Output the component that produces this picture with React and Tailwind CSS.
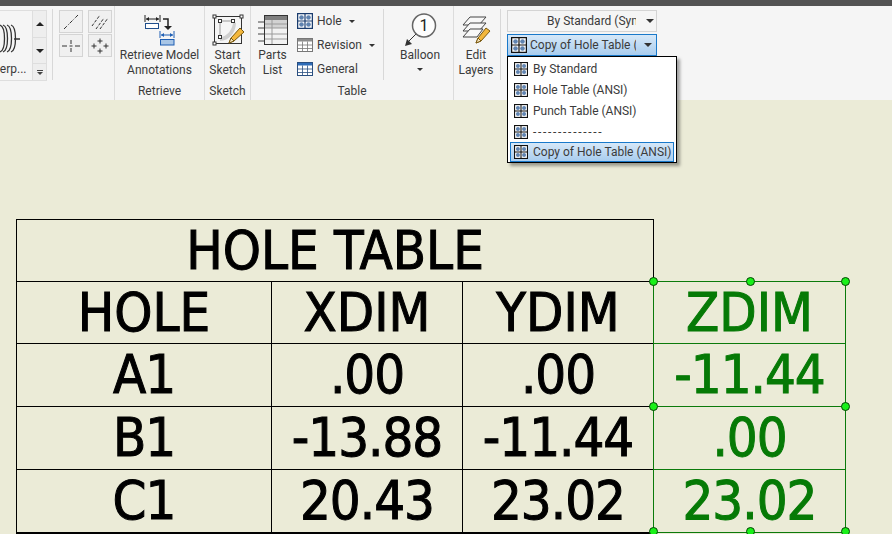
const uiFont = "font-['Roboto','Open_Sans',sans-serif]";

function HoleIcon({ size = 16, line = "#111" }) {
    return (
        <svg width={size} height={size} viewBox="0 0 16 16" className="shrink-0">
            <rect x="0.6" y="0.6" width="14.8" height="14.800" fill="#fff" stroke={line} strokeWidth="1.300" />
            <path d="M8 1V15M1 8H15" stroke={line} strokeWidth="1.200" />
            <circle cx="4.5" cy="4.5" r="2.300" fill="#5f83b0" />
            <circle cx="11.5" cy="4.5" r="2.300" fill="#5f83b0" />
            <circle cx="4.5" cy="11.5" r="2.300" fill="#5f83b0" />
            <circle cx="11.5" cy="11.5" r="2.300" fill="#5f83b0" />
        </svg>
    );
}

function SmallTableIcon({ head, line }) {
    return (
        <svg width="16" height="16" viewBox="0 0 16 16" className="shrink-0">
            <rect x="0.5" y="1.5" width="15" height="13" fill="#fff" stroke={line} />
            <rect x="1" y="2" width="14" height="2.5" fill={head} />
            <path d="M1 8H15M1 11.500H15M5.500 4.500V14M10.500 4.500V14" stroke={line} strokeWidth="0.8" />
        </svg>
    );
}

function Caret({ className = "border-x-[3px] border-t-[3px]" }) {
    return <span className={`inline-block h-0 w-0 border-x-transparent border-t-[#333] ${className}`} />;
}

function ShortSeparator() {
    return <div className="mt-[3px] h-[71px] w-px shrink-0 bg-[#d8d8d8]" />;
}

function LineButton({ children }) {
    return (
        <div className="flex h-[23px] w-[24px] items-center justify-center border border-[#d4d4d4] bg-[#f0f0f0]">
            <svg width="20" height="20" viewBox="0 0 20 20" fill="none" stroke="#333">
                {children}
            </svg>
        </div>
    );
}

function Panel({ label, width, children }) {
    return (
        <section className="flex h-full shrink-0 flex-col border-r border-[#dcdcdc]" style={{ width }}>
            <div className="flex h-[77px] pt-[7px]">{children}</div>
            <div className="text-center text-[12px] leading-[16px] text-[#3b3b3b]">{label}</div>
        </section>
    );
}

function Gallery() {
    return (
        <div className="flex h-full w-[53px] shrink-0 justify-between">
            <div className="mt-[4px] flex h-[71px] w-[47px] border-y border-r border-[#dedede]">
                <div className="flex w-[32px] flex-col overflow-hidden">
                    <svg width="32" height="36" viewBox="0 0 32 36" fill="none" stroke="#333" strokeWidth="1.300" className="mt-[7px]">
                        <path d="M0 7C6 9 6 32 0 34M3 7C9 9 9 32 3 34M7 7C13 9 13 32 7 34M11 7C17 9 17 32 11 34M14 21H20" />
                    </svg>
                    <div className="-ml-[14px] mt-[7px] whitespace-nowrap text-[12px] leading-[16px] text-[#3b3b3b]">Interp...</div>
                </div>
                <div className="flex w-[14px] flex-col border-l border-[#dedede] bg-[#eeeeee]">
                    <div className="flex h-[27px] items-center justify-center border-b border-[#dedede]">
                        <span className="h-0 w-0 border-x-[4px] border-b-[4px] border-x-transparent border-b-[#222]" />
                    </div>
                    <div className="flex h-[26px] items-center justify-center border-b border-[#dedede]">
                        <span className="h-0 w-0 border-x-[4px] border-t-[4px] border-x-transparent border-t-[#222]" />
                    </div>
                    <div className="flex flex-1 flex-col items-center justify-center gap-[1px]">
                        <span className="h-[1px] w-[6px] bg-[#444]" />
                        <span className="h-0 w-0 border-x-[3px] border-t-[3px] border-x-transparent border-t-[#444]" />
                    </div>
                </div>
            </div>
            <ShortSeparator />
        </div>
    );
}

function LineTools() {
    return (
        <div className="h-full w-[62px] shrink-0 border-r border-[#dcdcdc] pl-[6px] pt-[4px]">
            <div className="grid grid-cols-[24px_24px] gap-x-[5px] gap-y-[1px]">
                <LineButton><path d="M3 17L17 3" strokeDasharray="4 1.500 1 1.500" /></LineButton>
                <LineButton><path d="M2 14L10 3M6 17L14 6M10 17L18 6" strokeDasharray="3 1.500" /></LineButton>
                <LineButton><path d="M1 10H6M8.500 10H11.500M14 10H19M10 4V8M10 12V16" /></LineButton>
                <LineButton><path d="M10 2.500V7.500M7.500 5H12.500M4 7.500V12.500M1.500 10H6.500M16 7.500V12.500M13.500 10H18.500M10 12.500V17.500M7.500 15H12.500" /></LineButton>
            </div>
        </div>
    );
}

function RetrieveIcon() {
    return (
        <svg width="32" height="32" viewBox="0 0 32 32" fill="none">
            <path d="M1 1V8M16 1V8M2 5H15" stroke="#222" />
            <path d="M2 5L5 3V7ZM15 5L12 3V7Z" fill="#222" />
            <rect x="1.500" y="9.500" width="13" height="5" fill="#fff" stroke="#1f4e8c" />
            <path d="M19 5H24V13" stroke="#222" strokeWidth="1.500" />
            <path d="M20 12H28L24 16Z" fill="#222" />
            <path d="M16 17V24M30 17V24M17 21H29" stroke="#1f5fb4" />
            <path d="M17 21L20 19V23ZM29 21L26 19V23Z" fill="#1f5fb4" />
            <rect x="16.500" y="25.500" width="13.500" height="5.500" fill="#a9c6e6" stroke="#1f5fb4" />
        </svg>
    );
}

function SketchIcon() {
    return (
        <svg width="32" height="32" viewBox="0 0 32 32" fill="none">
            <rect x="2.500" y="2.500" width="27" height="27" stroke="#333" />
            <path d="M8 23C15 23 21 15 21 8L21 7L24 9C24 18 17 27 8 27Z" fill="#cfcfcf" />
            <path d="M8 7H21M8 7V23" stroke="#999" />
            {[[2.500, 2.500], [29.500, 2.500], [2.500, 29.500], [8, 7], [21, 7], [8, 23]].map(([x, y]) => (
                <rect key={`${x}-${y}`} x={x - 1.500} y={y - 1.500} width="3" height="3" fill="#fff" stroke="#333" />
            ))}
            <path d="M17 29L19 24L28 14L32 18L22 27Z" fill="#f3b73c" stroke="#7a5a10" />
            <path d="M17 29L19 24L22 27Z" fill="#f6e3bd" stroke="#7a5a10" />
        </svg>
    );
}

function PartsListIcon() {
    return (
        <svg width="32" height="32" viewBox="0 0 32 32" fill="none">
            <rect x="7.500" y="1.500" width="23" height="29" fill="#f2f2f2" stroke="#333" />
            <rect x="8" y="2" width="22" height="4" fill="#7f7f7f" />
            <rect x="8" y="6" width="22" height="8" fill="#d2d2d2" />
            <path d="M8 10H30M8 14H30M8 20H30M8 25H30M15 6V30" stroke="#9a9a9a" />
            <path d="M1 8H7M1 14H7M1 20H7M1 27H7" stroke="#444" />
        </svg>
    );
}

function BalloonIcon() {
    return (
        <svg width="33" height="34" viewBox="0 0 33 34" fill="none" className="block">
            <path d="M12 21L3 30" stroke="#333" />
            <path d="M1 33L3 26L8 31Z" fill="#333" />
            <circle cx="20" cy="12.500" r="11.500" fill="#fdfdfd" stroke="#666" strokeWidth="1.500" />
            <text x="20" y="18" textAnchor="middle" fontSize="16" fill="#222" fontFamily="Roboto, sans-serif">1</text>
        </svg>
    );
}

function LayersIcon() {
    return (
        <svg width="30" height="30" viewBox="0 0 30 30" fill="none" stroke="#444">
            <path d="M9 2H25L18 10H2Z" fill="#f8f8f8" />
            <path d="M9 8H25L18 16H2Z" fill="#f8f8f8" />
            <path d="M9 14H22L16 22H2Z" fill="#f8f8f8" />
            <path d="M15 28L17 23L25 13L29 16L20 26Z" fill="#f3b73c" stroke="#7a5a10" />
            <path d="M15 28L17 23L20 26Z" fill="#f6e3bd" stroke="#7a5a10" />
        </svg>
    );
}

function BigButton({ icon, lines, width, extra }) {
    return (
        <div className="flex flex-col items-center text-center text-[12px] leading-[15px] text-[#3b3b3b]" style={{ width }}>
            <div className="flex h-[33px] items-center justify-center">{icon}</div>
            <div className="mt-[2px]">
                {lines.map((line) => (
                    <div key={line} className="whitespace-nowrap">{line}</div>
                ))}
                {extra}
            </div>
        </div>
    );
}

function TableTool({ icon, label, caret }) {
    return (
        <div className="flex h-[24px] items-center gap-[4px] text-[12px] text-[#3b3b3b]">
            {icon}
            <span>{label}</span>
            {caret && <Caret className="ml-[3px] border-x-[3px] border-t-[3px]" />}
        </div>
    );
}

function TablePanel() {
    return (
        <section className="flex h-full w-[203px] shrink-0 flex-col border-r border-[#dcdcdc]">
            <div className="flex h-[77px]">
                <div className="flex w-[133px] shrink-0 justify-between">
                    <div className="flex">
                        <div className="w-[44px] pt-[7px]">
                            <BigButton width={43} icon={<PartsListIcon />} lines={["Parts", "List"]} />
                        </div>
                        <div className="ml-[2px] flex flex-col pt-[3px]">
                            <TableTool icon={<HoleIcon line="#1a3c6e" />} label="Hole" caret />
                            <TableTool icon={<SmallTableIcon head="#8c8c8c" line="#777" />} label="Revision" caret />
                            <TableTool icon={<SmallTableIcon head="#2e6cb8" line="#2a4f80" />} label="General" />
                        </div>
                    </div>
                    <ShortSeparator />
                </div>
                <div className="w-[70px] pl-[1px] pt-[7px]">
                    <BigButton
                        width={70}
                        icon={<BalloonIcon />}
                        lines={["Balloon"]}
                        extra={<div className="flex h-[12px] items-center justify-center"><Caret /></div>}
                    />
                </div>
            </div>
            <div className="text-center text-[12px] leading-[16px] text-[#3b3b3b]">Table</div>
        </section>
    );
}

function StylePicker() {
    return (
        <div className="relative ml-[6px] w-[150px] pt-[4px] text-[12px] text-[#3b3b3b]">
            <div className="flex h-[22px] items-center border border-[#d4d4d4] bg-[#f5f5f5] pl-[39px]">
                <span className="w-[89px] overflow-hidden whitespace-nowrap">By Standard (Symbol)</span>
                <Caret className="ml-[10px] border-x-[4px] border-t-[4px]" />
            </div>
            <div className="mt-[2px] flex h-[22px] items-center gap-[3px] border border-[#1979ca] bg-gradient-to-b from-[#d6e8f8] to-[#a9cdee] pl-[3px]">
                <HoleIcon />
                <span className="w-[106px] overflow-hidden whitespace-nowrap">Copy of Hole Table (ANSI)</span>
                <Caret className="ml-[5px] border-x-[4px] border-t-[4px]" />
            </div>
            <div className="absolute left-0 top-[50px] z-10 w-[170px] border border-black bg-white px-[2px] pt-[1px] shadow-[3px_3px_3px_rgba(0,0,0,0.35)]">
                {["By Standard", "Hole Table (ANSI)", "Punch Table (ANSI)"].map((item) => (
                    <div key={item} className="flex h-[21px] items-center gap-[5px] pl-[4px]">
                        <HoleIcon size={14} />
                        <span className="whitespace-nowrap">{item}</span>
                    </div>
                ))}
                <div className="flex h-[21px] items-center gap-[5px] pl-[4px]">
                    <HoleIcon size={14} />
                    <span className="whitespace-nowrap tracking-[1.7px]">--------------</span>
                </div>
                <div className="flex h-[20px] items-center gap-[5px] border border-[#1979ca] bg-gradient-to-b from-[#d6e8f8] to-[#a9cdee] pl-[3px]">
                    <HoleIcon size={14} />
                    <span className="whitespace-nowrap">Copy of Hole Table (ANSI)</span>
                </div>
            </div>
        </div>
    );
}

function Ribbon() {
    return (
        <div className={`flex h-[94px] shrink-0 bg-[#f5f5f5] ${uiFont}`}>
            <Gallery />
            <LineTools />
            <Panel label="Retrieve" width={90}>
                <BigButton width={90} icon={<RetrieveIcon />} lines={["Retrieve Model", "Annotations"]} />
            </Panel>
            <Panel label="Sketch" width={46}>
                <BigButton width={46} icon={<SketchIcon />} lines={["Start", "Sketch"]} />
            </Panel>
            <TablePanel />
            <div className="flex h-full w-[47px] shrink-0 justify-between pt-[7px]">
                <BigButton width={44} icon={<LayersIcon />} lines={["Edit", "Layers"]} />
                <div className="-mt-[4px] h-[71px] w-px shrink-0 bg-[#d8d8d8]" />
            </div>
            <StylePicker />
        </div>
    );
}

const ROWS = [
    ["HOLE", "XDIM", "YDIM", "ZDIM"],
    ["A1", ".00", ".00", "-11.44"],
    ["B1", "-13.88", "-11.44", ".00"],
    ["C1", "20.43", "23.02", "23.02"],
];

const HANDLES = [
    "left-[-5px] top-[-5px]",
    "left-[92px] top-[-5px]",
    "left-[187px] top-[-5px]",
    "left-[-5px] top-[120px]",
    "left-[187px] top-[120px]",
    "left-[-5px] top-[245px]",
    "left-[92px] top-[245px]",
    "left-[187px] top-[245px]",
];

function Cell({ text, selected, numeric }) {
    return (
        <div className={`flex items-center justify-center whitespace-nowrap border-b border-r ${numeric ? "tracking-[-1px]" : ""} ${selected ? "border-[#0b7a0b] text-[#067a06] [-webkit-text-stroke:1px_#067a06]" : "border-black text-black [-webkit-text-stroke:1px_#000]"}`}>
            {text}
        </div>
    );
}

function HoleTable() {
    return (
        <div className="relative w-[830px] font-['DejaVu_Sans_Condensed','DejaVu_Sans',sans-serif] text-[54px] leading-none">
            <div className="flex h-[62px] w-[638px] items-center justify-center border-x border-t border-black [-webkit-text-stroke:1px_#000]">HOLE TABLE</div>
            <div className="grid grid-cols-[255px_191px_191px_192px] grid-rows-[62px_63px_63px_63px] border-l border-t border-black">
                {ROWS.map((row, rowIndex) =>
                    row.map((text, index) => (
                        <Cell key={`${row[0]}-${index}`} text={text} selected={index === 3} numeric={rowIndex > 0} />
                    ))
                )}
            </div>
            <div className="h-[1px] w-[638px] bg-black" />
            <div className="absolute left-[637px] top-[62px] h-[252px] w-[193px] border-x border-t border-[#0b7a0b]">
                {HANDLES.map((position) => (
                    <span key={position} className={`absolute h-[9px] w-[9px] rounded-full border border-[#064406] bg-[#19f019] ${position}`} />
                ))}
            </div>
        </div>
    );
}

export default function App() {
    return (
        <div className="flex h-[534px] w-[892px] flex-col overflow-hidden bg-[#ebebd7]">
            <div className="h-[6px] shrink-0 bg-[#535353]" />
            <Ribbon />
            <div className="pl-[16px] pt-[119px]">
                <HoleTable />
            </div>
        </div>
    );
}
